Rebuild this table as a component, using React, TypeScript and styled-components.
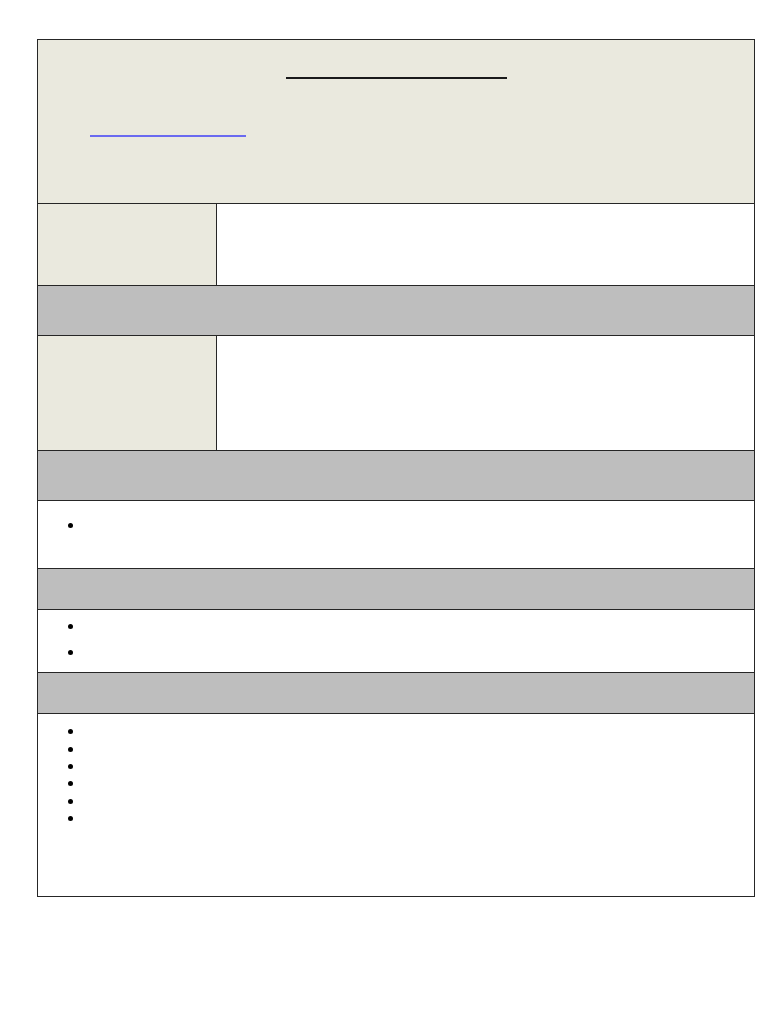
import { FC } from "react";
import styled, { createGlobalStyle } from "styled-components";

const GlobalStyle = createGlobalStyle`
  html, body {
    margin: 0;
    padding: 0;
    background: #ffffff;
    font-family: "Liberation Serif", "Times New Roman", serif;
  }
`;

const Page = styled.div`
  padding: 39px 0 40px 37px;
`;

const Sheet = styled.div`
  width: 718px;
  box-sizing: border-box;
  border: 1px solid #262626;
  display: flex;
  flex-direction: column;
`;

const Header = styled.div`
  height: 164px;
  box-sizing: border-box;
  background: #eae9de;
  border-bottom: 1px solid #262626;
  display: flex;
  flex-direction: column;
  padding: 37px 0 0 52px;
`;

const Title = styled.span`
  align-self: center;
  margin-left: -52px;
  width: 221px;
  height: 2px;
  background: #1a1a1a;
`;

const Link = styled.a`
  display: block;
  margin-top: 56px;
  width: 156px;
  height: 2px;
  background: #6a6af0;
`;

const Row = styled.div<{ h: number }>`
  height: ${(p) => p.h}px;
  display: flex;
  border-bottom: 1px solid #262626;
`;

const LabelCell = styled.div`
  width: 178px;
  background: #eae9de;
  border-right: 1px solid #262626;
`;

const ValueCell = styled.div`
  flex: 1;
  background: #ffffff;
`;

const Band = styled.div<{ h: number }>`
  height: ${(p) => p.h}px;
  background: #bebebe;
  border-bottom: 1px solid #262626;
`;

const Section = styled.div<{ h: number; last?: boolean }>`
  height: ${(p) => p.h}px;
  background: #ffffff;
  border-bottom: ${(p) => (p.last ? "none" : "1px solid #262626")};
`;

const List = styled.ul<{ top: number; gap: number }>`
  margin: 0;
  padding: ${(p) => p.top}px 0 0 30px;
  list-style: none;
  display: flex;
  flex-direction: column;
  gap: ${(p) => p.gap}px;
`;

const Item = styled.li<{ h: number }>`
  height: ${(p) => p.h}px;
  display: flex;
  align-items: center;

  &::before {
    content: "";
    width: 5px;
    height: 5px;
    border-radius: 50%;
    background: #000000;
  }
`;

const Bullets: FC<{ count: number; top: number; gap: number; h: number }> = ({
  count,
  top,
  gap,
  h,
}) => (
  <List top={top} gap={gap}>
    {Array.from({ length: count }).map((_, i) => (
      <Item key={i} h={h} />
    ))}
  </List>
);

export default function App() {
  return (
    <>
      <GlobalStyle />
      <Page>
        <Sheet>
          <Header>
            <Title />
            <Link href="#" />
          </Header>

          <Row h={81}>
            <LabelCell />
            <ValueCell />
          </Row>
          <Band h={49} />

          <Row h={114}>
            <LabelCell />
            <ValueCell />
          </Row>
          <Band h={49} />

          <Section h={67}>
            <Bullets count={1} top={14} gap={0} h={20} />
          </Section>
          <Band h={40} />

          <Section h={62}>
            <Bullets count={2} top={6} gap={6} h={20} />
          </Section>
          <Band h={40} />

          <Section h={182} last>
            <Bullets count={6} top={9} gap={0} h={17.4} />
          </Section>
        </Sheet>
      </Page>
    </>
  );
}
